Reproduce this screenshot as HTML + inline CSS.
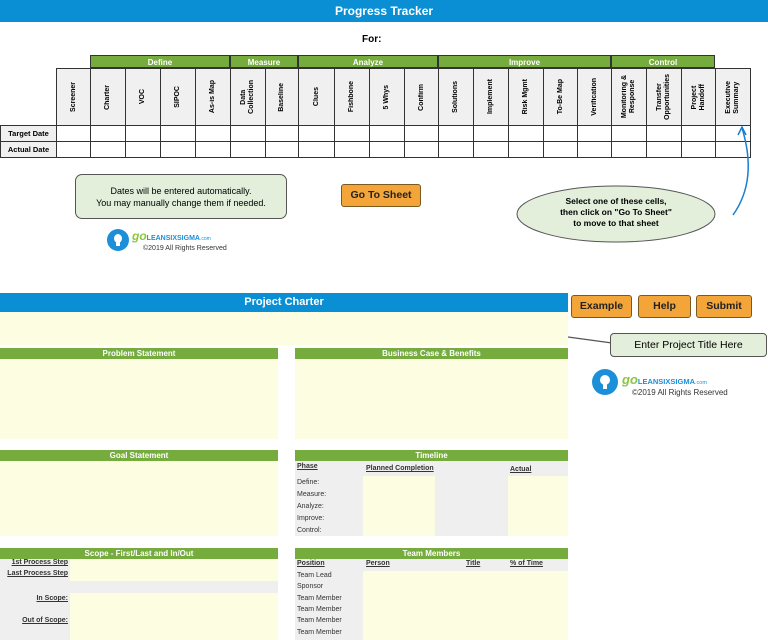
<!DOCTYPE html>
<html><head><style>
*{margin:0;padding:0;box-sizing:border-box}
body{width:768px;height:640px;position:relative;background:#fff;font-family:"Liberation Sans",Arial,sans-serif;overflow:hidden}
.a{position:absolute}
.blue{background:#0a8fd5;color:#fff;font-weight:bold;text-align:center}
.green{background:#76ab3e;color:#fff;font-weight:bold;text-align:center;font-size:8px;line-height:11px}
.yel{background:#fdfde2}
.gray{background:#efefef}
.cell{position:absolute;border:1px solid #333;background:#fff}
.vh{position:absolute;border:1px solid #333;background:#f0f0f0;display:flex;align-items:center;justify-content:center}
.vh span{writing-mode:vertical-rl;transform:rotate(180deg);font-size:7px;font-weight:bold;text-align:center;line-height:8px}
.btn{position:absolute;background:#f3a53a;border:1.5px solid #7a5a20;border-radius:3px;font-weight:bold;font-size:10.5px;text-align:center;color:#222}
.lbl{font-size:7px;color:#333;position:absolute}
.u{text-decoration:underline;font-weight:bold}
</style></head><body>
<div class="a blue" style="left:0;top:0;width:768px;height:22px;font-size:12px;line-height:22px">Progress Tracker</div>
<div class="a" style="left:362px;top:34px;font-size:10px;font-weight:bold">For:</div>

<!-- group headers -->
<div class="a green" style="left:90px;top:55px;width:140px;height:13px;line-height:13px;border:1px solid #333">Define</div>
<div class="a green" style="left:230px;top:55px;width:68px;height:13px;line-height:13px;border:1px solid #333">Measure</div>
<div class="a green" style="left:298px;top:55px;width:140px;height:13px;line-height:13px;border:1px solid #333">Analyze</div>
<div class="a green" style="left:438px;top:55px;width:173px;height:13px;line-height:13px;border:1px solid #333">Improve</div>
<div class="a green" style="left:611px;top:55px;width:104px;height:13px;line-height:13px;border:1px solid #333">Control</div>

<div class="vh" style="left:56px;top:68px;width:35px;height:58px"><span>Screener</span></div>
<div class="vh" style="left:90px;top:68px;width:36px;height:58px"><span>Charter</span></div>
<div class="vh" style="left:125px;top:68px;width:36px;height:58px"><span>VOC</span></div>
<div class="vh" style="left:160px;top:68px;width:36px;height:58px"><span>SIPOC</span></div>
<div class="vh" style="left:195px;top:68px;width:36px;height:58px"><span>As-is Map</span></div>
<div class="vh" style="left:230px;top:68px;width:36px;height:58px"><span>Data<br>Collection</span></div>
<div class="vh" style="left:265px;top:68px;width:34px;height:58px"><span>Baseline</span></div>
<div class="vh" style="left:298px;top:68px;width:37px;height:58px"><span>Clues</span></div>
<div class="vh" style="left:334px;top:68px;width:36px;height:58px"><span>Fishbone</span></div>
<div class="vh" style="left:369px;top:68px;width:36px;height:58px"><span>5 Whys</span></div>
<div class="vh" style="left:404px;top:68px;width:35px;height:58px"><span>Confirm</span></div>
<div class="vh" style="left:438px;top:68px;width:36px;height:58px"><span>Solutions</span></div>
<div class="vh" style="left:473px;top:68px;width:36px;height:58px"><span>Implement</span></div>
<div class="vh" style="left:508px;top:68px;width:36px;height:58px"><span>Risk Mgmt</span></div>
<div class="vh" style="left:543px;top:68px;width:35px;height:58px"><span>To-Be Map</span></div>
<div class="vh" style="left:577px;top:68px;width:35px;height:58px"><span>Verification</span></div>
<div class="vh" style="left:611px;top:68px;width:36px;height:58px"><span>Monitoring &amp;<br>Response</span></div>
<div class="vh" style="left:646px;top:68px;width:36px;height:58px"><span>Transfer<br>Opportunities</span></div>
<div class="vh" style="left:681px;top:68px;width:35px;height:58px"><span>Project<br>Handoff</span></div>
<div class="vh" style="left:715px;top:68px;width:36px;height:58px"><span>Executive<br>Summary</span></div>

<div class="vh" style="left:0;top:125px;width:57px;height:17px;font-size:7.5px;font-weight:bold">Target Date</div>
<div class="vh" style="left:0;top:141px;width:57px;height:17px;font-size:7.5px;font-weight:bold">Actual Date</div>
<div id="grid"></div>
<svg class="a" style="left:0;top:0" width="768" height="640">
<g stroke="#333" stroke-width="1" fill="none">
<rect x="56.5" y="125.5" width="694" height="32"/>
<line x1="56" y1="141.5" x2="751" y2="141.5"/>
<line x1="90.5" y1="125" x2="90.5" y2="158"/><line x1="125.5" y1="125" x2="125.5" y2="158"/><line x1="160.5" y1="125" x2="160.5" y2="158"/><line x1="195.5" y1="125" x2="195.5" y2="158"/><line x1="230.5" y1="125" x2="230.5" y2="158"/><line x1="265.5" y1="125" x2="265.5" y2="158"/><line x1="298.5" y1="125" x2="298.5" y2="158"/><line x1="334.5" y1="125" x2="334.5" y2="158"/><line x1="369.5" y1="125" x2="369.5" y2="158"/><line x1="404.5" y1="125" x2="404.5" y2="158"/><line x1="438.5" y1="125" x2="438.5" y2="158"/><line x1="473.5" y1="125" x2="473.5" y2="158"/><line x1="508.5" y1="125" x2="508.5" y2="158"/><line x1="543.5" y1="125" x2="543.5" y2="158"/><line x1="577.5" y1="125" x2="577.5" y2="158"/><line x1="611.5" y1="125" x2="611.5" y2="158"/><line x1="646.5" y1="125" x2="646.5" y2="158"/><line x1="681.5" y1="125" x2="681.5" y2="158"/><line x1="715.5" y1="125" x2="715.5" y2="158"/>
</g>
<path d="M733 215 Q758 180 742 128" stroke="#1a7fd0" stroke-width="1.5" fill="none"/>
<path d="M738 135 L742 127 L746 135" stroke="#1a7fd0" stroke-width="1.5" fill="none"/>
<ellipse cx="616" cy="214" rx="99" ry="28" fill="#e3eedb" stroke="#555" stroke-width="1"/>
<path d="M568 337 L612 343" stroke="#555" stroke-width="1.2" fill="none"/>
</svg>

<div class="a" style="left:75px;top:174px;width:212px;height:45px;background:#e3eedb;border:1px solid #555;border-radius:7px;font-size:9px;text-align:center;padding-top:10px;line-height:12px">Dates will be entered automatically.<br>You may manually change them if needed.</div>
<div class="btn" style="left:341px;top:184px;width:80px;height:23px;line-height:20px">Go To Sheet</div>
<div class="a" style="left:517px;top:196px;width:198px;font-size:8.5px;font-weight:bold;text-align:center;line-height:11px">Select one of these cells,<br>then click on "Go To Sheet"<br>to move to that sheet</div>

<!-- logo 1 -->
<div class="a" style="left:107px;top:229px;width:22px;height:22px;border-radius:50%;background:#1b8fd8"><div class="a" style="left:7px;top:5px;width:8px;height:9px;border-radius:50%;background:#fff"></div><div class="a" style="left:9px;top:13px;width:4px;height:4px;background:#fff"></div></div>
<div class="a" style="left:132px;top:229px;font-size:8px;white-space:nowrap"><b style="color:#8cc63f;font-size:12px;font-style:italic">go</b><span style="color:#1b8fd8;font-size:7px;font-weight:bold">LEANSIXSIGMA</span><span style="color:#1b8fd8;font-size:5px">.com</span></div>
<div class="a" style="left:143px;top:245px;font-size:7px;color:#333">©2019 All Rights Reserved</div>

<!-- charter -->
<div class="a blue" style="left:0;top:293px;width:568px;height:19px;font-size:11px;line-height:19px">Project Charter</div>
<div class="a yel" style="left:0;top:312px;width:568px;height:33px"></div>
<div class="btn" style="left:571px;top:295px;width:61px;height:23px;line-height:20px">Example</div>
<div class="btn" style="left:638px;top:295px;width:53px;height:23px;line-height:20px">Help</div>
<div class="btn" style="left:696px;top:295px;width:56px;height:23px;line-height:20px">Submit</div>
<div class="a" style="left:610px;top:333px;width:157px;height:24px;background:#e3eedb;border:1px solid #555;border-radius:4px;font-size:10.5px;text-align:center;line-height:22px">Enter Project Title Here</div>
<div class="a" style="left:592px;top:369px;width:26px;height:26px;border-radius:50%;background:#1b8fd8"><div class="a" style="left:8px;top:6px;width:10px;height:10px;border-radius:50%;background:#fff"></div><div class="a" style="left:11px;top:15px;width:4px;height:5px;background:#fff"></div></div>
<div class="a" style="left:622px;top:371px;white-space:nowrap"><b style="color:#8cc63f;font-size:13px;font-style:italic">go</b><span style="color:#1b8fd8;font-size:7.5px;font-weight:bold">LEANSIXSIGMA</span><span style="color:#1b8fd8;font-size:5.5px">.com</span></div>
<div class="a" style="left:632px;top:388px;font-size:8px;color:#333">©2019 All Rights Reserved</div>

<div class="a green" style="left:0;top:348px;width:278px;height:11px">Problem Statement</div>
<div class="a yel" style="left:0;top:359px;width:278px;height:80px"></div>
<div class="a green" style="left:295px;top:348px;width:273px;height:11px">Business Case &amp; Benefits</div>
<div class="a yel" style="left:295px;top:359px;width:273px;height:80px"></div>

<div class="a green" style="left:0;top:450px;width:278px;height:11px">Goal Statement</div>
<div class="a yel" style="left:0;top:461px;width:278px;height:75px"></div>
<div class="a green" style="left:295px;top:450px;width:273px;height:11px">Timeline</div>
<div class="a gray" style="left:295px;top:461px;width:273px;height:75px"></div>
<div class="a yel" style="left:363px;top:476px;width:72px;height:60px"></div>
<div class="a yel" style="left:508px;top:476px;width:60px;height:60px"></div>
<div class="lbl u" style="left:297px;top:463px">Phase</div>
<div class="lbl u" style="left:366px;top:465px">Planned Completion</div>
<div class="lbl u" style="left:510px;top:466px">Actual</div>
<div class="lbl" style="left:297px;top:479px">Define:</div>
<div class="lbl" style="left:297px;top:491px">Measure:</div>
<div class="lbl" style="left:297px;top:503px">Analyze:</div>
<div class="lbl" style="left:297px;top:515px">Improve:</div>
<div class="lbl" style="left:297px;top:527px">Control:</div>

<div class="a green" style="left:0;top:548px;width:278px;height:11px">Scope - First/Last and In/Out</div>
<div class="a gray" style="left:0;top:559px;width:278px;height:81px"></div>
<div class="a yel" style="left:70px;top:559px;width:208px;height:22px"></div>
<div class="a yel" style="left:70px;top:593px;width:208px;height:47px"></div>
<div class="lbl u" style="right:700px;top:559px">1st Process Step</div>
<div class="lbl u" style="right:700px;top:570px">Last Process Step</div>
<div class="lbl u" style="right:700px;top:595px">In Scope:</div>
<div class="lbl u" style="right:700px;top:617px">Out of Scope:</div>

<div class="a green" style="left:295px;top:548px;width:273px;height:11px">Team Members</div>
<div class="a gray" style="left:295px;top:559px;width:273px;height:81px"></div>
<div class="a yel" style="left:363px;top:571px;width:205px;height:69px"></div>
<div class="lbl u" style="left:297px;top:560px">Position</div>
<div class="lbl u" style="left:366px;top:560px">Person</div>
<div class="lbl u" style="left:466px;top:560px">Title</div>
<div class="lbl u" style="left:510px;top:560px">% of Time</div>
<div class="lbl" style="left:297px;top:572px">Team Lead</div>
<div class="lbl" style="left:297px;top:583px">Sponsor</div>
<div class="lbl" style="left:297px;top:595px">Team Member</div>
<div class="lbl" style="left:297px;top:606px">Team Member</div>
<div class="lbl" style="left:297px;top:617px">Team Member</div>
<div class="lbl" style="left:297px;top:629px">Team Member</div>
</body></html>
